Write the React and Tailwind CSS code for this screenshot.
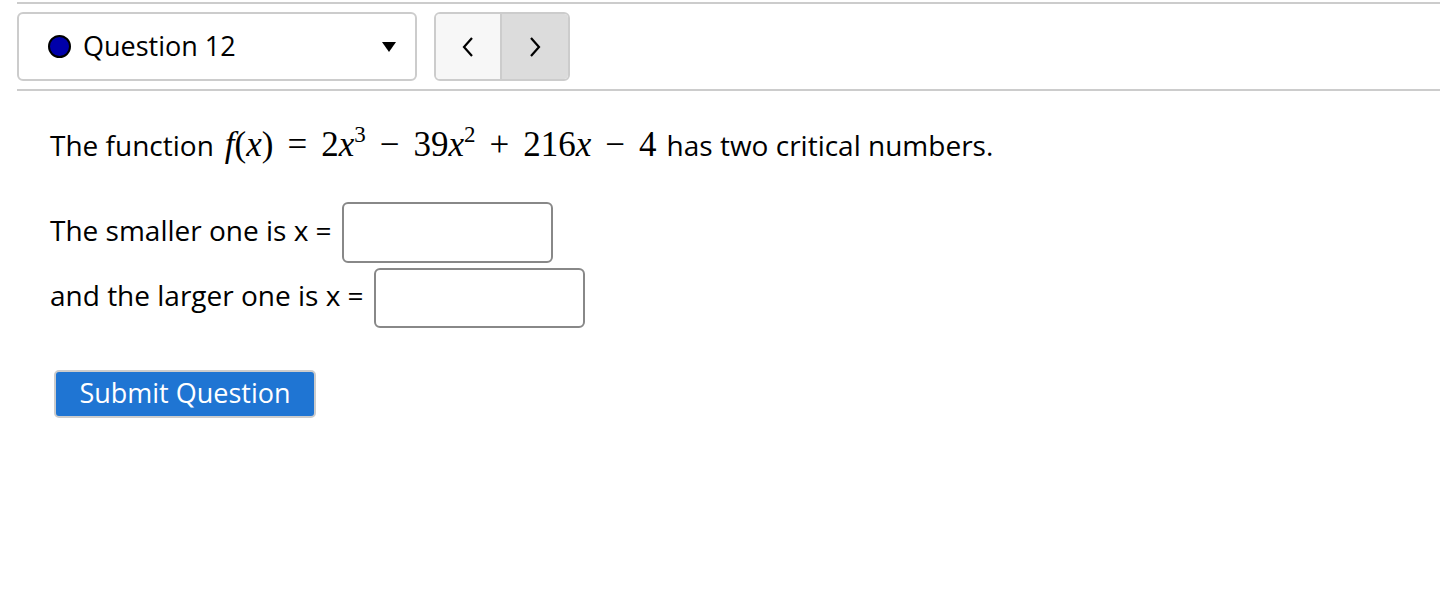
import React from 'react'

const MathExpr = () => (
  <span className="font-['Liberation_Serif',serif] text-[35px] leading-none ml-[11px] mr-[10px] whitespace-nowrap">
    <i>f</i>(<i>x</i>)<span className="mx-[14px]">=</span>2<i>x</i>
    <span className="text-[23px] relative -top-[14px]">3</span>
    <span className="mx-[14px]">−</span>39<i>x</i>
    <span className="text-[23px] relative -top-[14px]">2</span>
    <span className="mx-[14px]">+</span>216<i>x</i>
    <span className="mx-[14px]">−</span>4
  </span>
)

const App = () => {
  return (
    <div className="w-[1440px] h-[592px] bg-white pl-[17px] pt-[2px] text-black font-['Open_Sans','DejaVu_Sans',sans-serif]">
      <div className="border-t-2 border-[#cccccc]"></div>

      <div className="flex items-center gap-[17px] mt-[8px]">
        <div className="w-[400px] h-[69px] border-2 border-[#cccccc] rounded-[6px] flex items-center pl-[29px] pr-[18px]">
          <span className="w-[23px] h-[23px] rounded-full bg-[#0000aa] border-2 border-black"></span>
          <span className="ml-[12px] text-[27px] flex-1">Question 12</span>
          <svg width="16" height="12" viewBox="0 0 16 12"><path d="M1 1 L15 1 L8 11 Z" fill="#000" /></svg>
        </div>
        <div className="h-[69px] w-[136px] border-2 border-[#cccccc] rounded-[6px] flex overflow-hidden">
          <button className="w-[66px] h-full bg-[#f7f7f7] border-r-2 border-[#cccccc] flex items-center justify-center">
            <svg width="14" height="22" viewBox="0 0 14 22"><path d="M11 2 L3 11 L11 20" fill="none" stroke="#000" strokeWidth="2.2" /></svg>
          </button>
          <button className="flex-1 h-full bg-[#dcdcdc] flex items-center justify-center">
            <svg width="14" height="22" viewBox="0 0 14 22"><path d="M3 2 L11 11 L3 20" fill="none" stroke="#000" strokeWidth="2.2" /></svg>
          </button>
        </div>
      </div>

      <div className="border-t-2 border-[#cccccc] mt-[8px]"></div>

      <div className="pl-[33px] text-[28px] leading-[36px]">
        <p className="mt-[36px] h-[36px] whitespace-nowrap">
          The function<MathExpr />has two critical numbers.
        </p>
        <div className="mt-[39px] flex items-center">
          <span className="mb-[6px]">The smaller one is x =</span>
          <input type="text" className="ml-[10px] w-[211px] h-[61px] border-2 border-[#888888] rounded-[6px] outline-none" />
        </div>
        <div className="mt-[5px] flex items-center">
          <span className="mb-[6px]">and the larger one is x =</span>
          <input type="text" className="ml-[10px] w-[211px] h-[60px] border-2 border-[#888888] rounded-[6px] outline-none" />
        </div>
        <button className="mt-[42px] ml-[4px] w-[262px] h-[48px] pb-[4px] bg-[#1f75d3] border-2 border-[#cccccc] rounded-[5px] text-white text-[27px] leading-none">
          Submit Question
        </button>
      </div>
    </div>
  )
}

export default App
